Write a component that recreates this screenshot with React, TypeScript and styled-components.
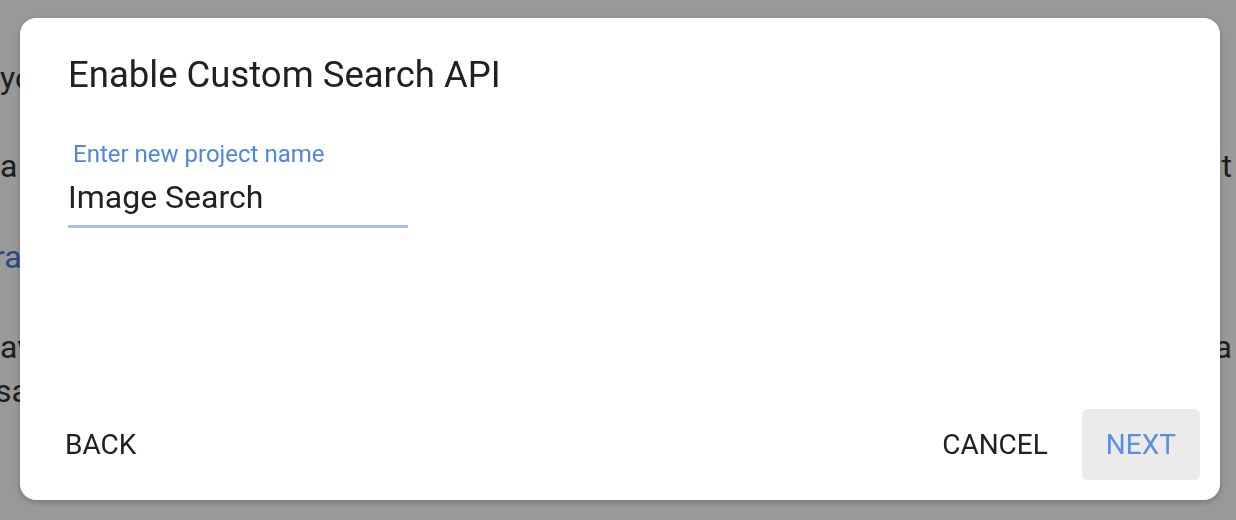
import React from "react";
import styled, { createGlobalStyle } from "styled-components";

const Global = createGlobalStyle`
  html, body { margin: 0; padding: 0; }
  body {
    font-family: Roboto, "Noto Sans", "Liberation Sans", sans-serif;
    background: #ffffff;
    width: 1236px;
    height: 520px;
    overflow: hidden;
  }
`;

const Page = styled.main`
  display: flex;
  flex-direction: column;
  padding-top: 56px;
  color: #333;
  font-size: 32px;
  line-height: 44px;
`;

const Para = styled.p<{ $gap: number }>`
  margin: ${(p) => p.$gap}px 0 0 0;
  display: flex;
  flex-direction: column;
`;

const Line = styled.span<{ $shift?: number }>`
  display: flex;
  justify-content: space-between;
  white-space: nowrap;
  margin-left: ${(p) => p.$shift ?? 0}px;
  padding-right: 4px;
`;

const PageLink = styled.a`
  color: #4a7ce6;
  text-decoration: none;
`;

const Overlay = styled.div`
  position: fixed;
  inset: 0;
  background: rgba(0, 0, 0, 0.4);
`;

const Dialog = styled.section`
  position: fixed;
  left: 20px;
  top: 18px;
  width: 1200px;
  height: 482px;
  box-sizing: border-box;
  background: #fff;
  border-radius: 16px;
  box-shadow: 0 2px 6px rgba(0, 0, 0, 0.25);
  display: flex;
  flex-direction: column;
  padding: 36px 20px 20px 21px;
`;

const Title = styled.h2`
  margin: 0 0 0 27px;
  font-size: 36.5px;
  font-weight: 400;
  line-height: 42px;
  color: #212121;
`;

const Field = styled.label`
  display: flex;
  flex-direction: column;
  width: 340px;
  margin: 44px 0 0 27px;
`;

const FieldLabel = styled.span`
  font-size: 24px;
  line-height: 28px;
  color: #4f86e0;
  padding-left: 5px;
`;

const Input = styled.input`
  font-family: inherit;
  font-size: 32px;
  color: #212121;
  border: none;
  outline: none;
  padding: 10px 0 9px 0;
  margin: 0;
  background: transparent;
  border-bottom: 3px solid #a4c0f0;
`;

const Footer = styled.footer`
  margin-top: auto;
  display: flex;
  align-items: center;
  gap: 10px;
`;

const Spacer = styled.div`
  flex: 1;
`;

const Button = styled.button<{ $primary?: boolean }>`
  font-family: inherit;
  font-size: 28px;
  font-weight: 400;
  height: 71px;
  padding: 0 24px;
  border: none;
  border-radius: 6px;
  cursor: pointer;
  background: ${(p) => (p.$primary ? "#ebebeb" : "transparent")};
  color: ${(p) => (p.$primary ? "#5a8fe3" : "#212121")};
`;

export default function App() {
  return (
    <>
      <Global />
      <Page>
        <Para $gap={0}>
          <Line>you can use the Custom Search JSON API, you will need to</Line>
        </Para>
        <Para $gap={44}>
          <Line>
            <span>a project that has the API enabled</span>
            <span>t</span>
          </Line>
        </Para>
        <Para $gap={47}>
          <Line $shift={-6}>
            <PageLink href="#">rage and quota information</PageLink>
          </Line>
        </Para>
        <Para $gap={46}>
          <Line>
            <span>avoid exceeding limits for your search engine and</span>
            <span>a</span>
          </Line>
          <Line $shift={-5}>sage of the API in the console</Line>
        </Para>
      </Page>
      <Overlay />
      <Dialog role="dialog" aria-label="Enable Custom Search API">
        <Title>Enable Custom Search API</Title>
        <Field>
          <FieldLabel>Enter new project name</FieldLabel>
          <Input defaultValue="Image Search" />
        </Field>
        <Footer>
          <Button>BACK</Button>
          <Spacer />
          <Button>CANCEL</Button>
          <Button $primary>NEXT</Button>
        </Footer>
      </Dialog>
    </>
  );
}
